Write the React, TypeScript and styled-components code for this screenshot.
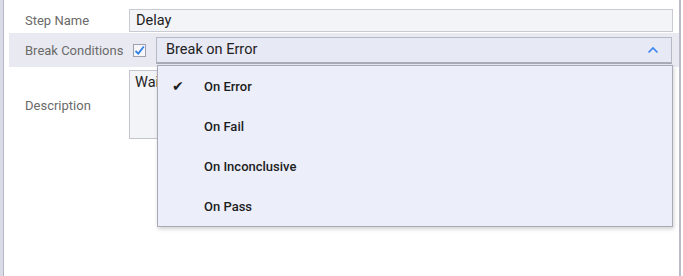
import React from "react";
import styled, { createGlobalStyle } from "styled-components";

const Global = createGlobalStyle`
  html, body { margin: 0; padding: 0; background: #fff; }
  body { font-family: Roboto, "Noto Sans", sans-serif; width: 683px; height: 276px; overflow: hidden; }
`;

const Frame = styled.div`
  display: flex;
  width: 683px;
  height: 276px;
  box-sizing: border-box;
`;

const LeftEdge = styled.div`
  width: 3px;
  background: #d9dbe7;
  border-right: 1px solid #b4b6c6;
  flex: none;
`;

const Panel = styled.div`
  flex: none;
  width: 675px;
  padding-top: 8px;
  display: flex;
  flex-direction: column;
  position: relative;
`;

const RightEdge = styled.div`
  width: 2px;
  background: #b9bbc9;
  flex: none;
`;

const Row = styled.div<{ $shaded?: boolean; $h: number }>`
  display: flex;
  align-items: center;
  height: ${(p) => p.$h}px;
  margin-left: 5px;
  padding-left: 16px;
  background: ${(p) => (p.$shaded ? "#e9eaf1" : "transparent")};
  box-sizing: border-box;
`;

const Label = styled.div`
  width: 104px;
  flex: none;
  font-size: 13px;
  color: #6a6a6a;
`;

const TextInput = styled.div`
  width: 544px;
  height: 23px;
  box-sizing: border-box;
  border: 1px solid #c9cad2;
  background: #f3f4f8;
  font-size: 14.5px;
  color: #222;
  padding-left: 6px;
  display: flex;
  align-items: center;
`;

const Check = styled.div`
  width: 13px;
  height: 13px;
  border: 1px solid #9ea0ad;
  background: #f7f7fb;
  box-sizing: border-box;
  margin-left: 4px;
  margin-right: 10px;
  display: flex;
  align-items: center;
  justify-content: center;
`;

const Select = styled.div`
  width: 516px;
  height: 27px;
  box-sizing: border-box;
  border: 1px solid #b7b9c6;
  border-bottom: 2px solid #a9abb8;
  background: #e7e9f5;
  font-size: 14.5px;
  color: #222;
  padding: 0 12px 0 9px;
  display: flex;
  align-items: center;
  justify-content: space-between;
`;

const TextArea = styled.div`
  width: 40px;
  height: 69px;
  box-sizing: border-box;
  border: 1px solid #c4c5cd;
  border-right: none;
  background: #f3f4f8;
  font-size: 14.5px;
  color: #222;
  padding: 3px 0 0 5px;
  align-self: flex-start;
  margin-top: 3px;
  overflow: hidden;
  white-space: nowrap;
`;

const Menu = styled.div`
  position: absolute;
  left: 153px;
  top: 65px;
  width: 516px;
  height: 162px;
  box-sizing: border-box;
  background: #eceef9;
  border: 1px solid #a8aab7;
  box-shadow: 1px 2px 4px rgba(0, 0, 0, 0.18);
`;

const Item = styled.div`
  height: 40px;
  display: flex;
  align-items: center;
  font-size: 13px;
  font-weight: 500;
  color: #1d1d1d;
`;

const Mark = styled.span`
  width: 46px;
  padding-left: 14px;
  box-sizing: border-box;
  font-size: 14px;
  flex: none;
  font-family: "DejaVu Sans", sans-serif;
`;

const items = ["On Error", "On Fail", "On Inconclusive", "On Pass"];

export default function App() {
  return (
    <Frame>
      <Global />
      <LeftEdge />
      <Panel>
        <Row $h={25}>
          <Label>Step Name</Label>
          <TextInput>Delay</TextInput>
        </Row>
        <Row $shaded $h={34}>
          <Label>Break Conditions</Label>
          <Check>
            <svg width="11" height="11" viewBox="0 0 11 11">
              <path d="M1.5 6 L4.3 8.6 L9.8 1.5" fill="none" stroke="#2f7fe6" strokeWidth="1.8" />
            </svg>
          </Check>
          <Select>
            <span>Break on Error</span>
            <svg width="12" height="8" viewBox="0 0 12 8">
              <path d="M1.5 6.5 L6 2 L10.5 6.5" fill="none" stroke="#3b86f0" strokeWidth="1.6" />
            </svg>
          </Select>
        </Row>
        <Row $h={76}>
          <Label>Description</Label>
          <TextArea>Wait</TextArea>
        </Row>
        <Menu>
          {items.map((t, i) => (
            <Item key={t}>
              <Mark>{i === 0 ? "✔" : ""}</Mark>
              {t}
            </Item>
          ))}
        </Menu>
      </Panel>
      <RightEdge />
    </Frame>
  );
}
